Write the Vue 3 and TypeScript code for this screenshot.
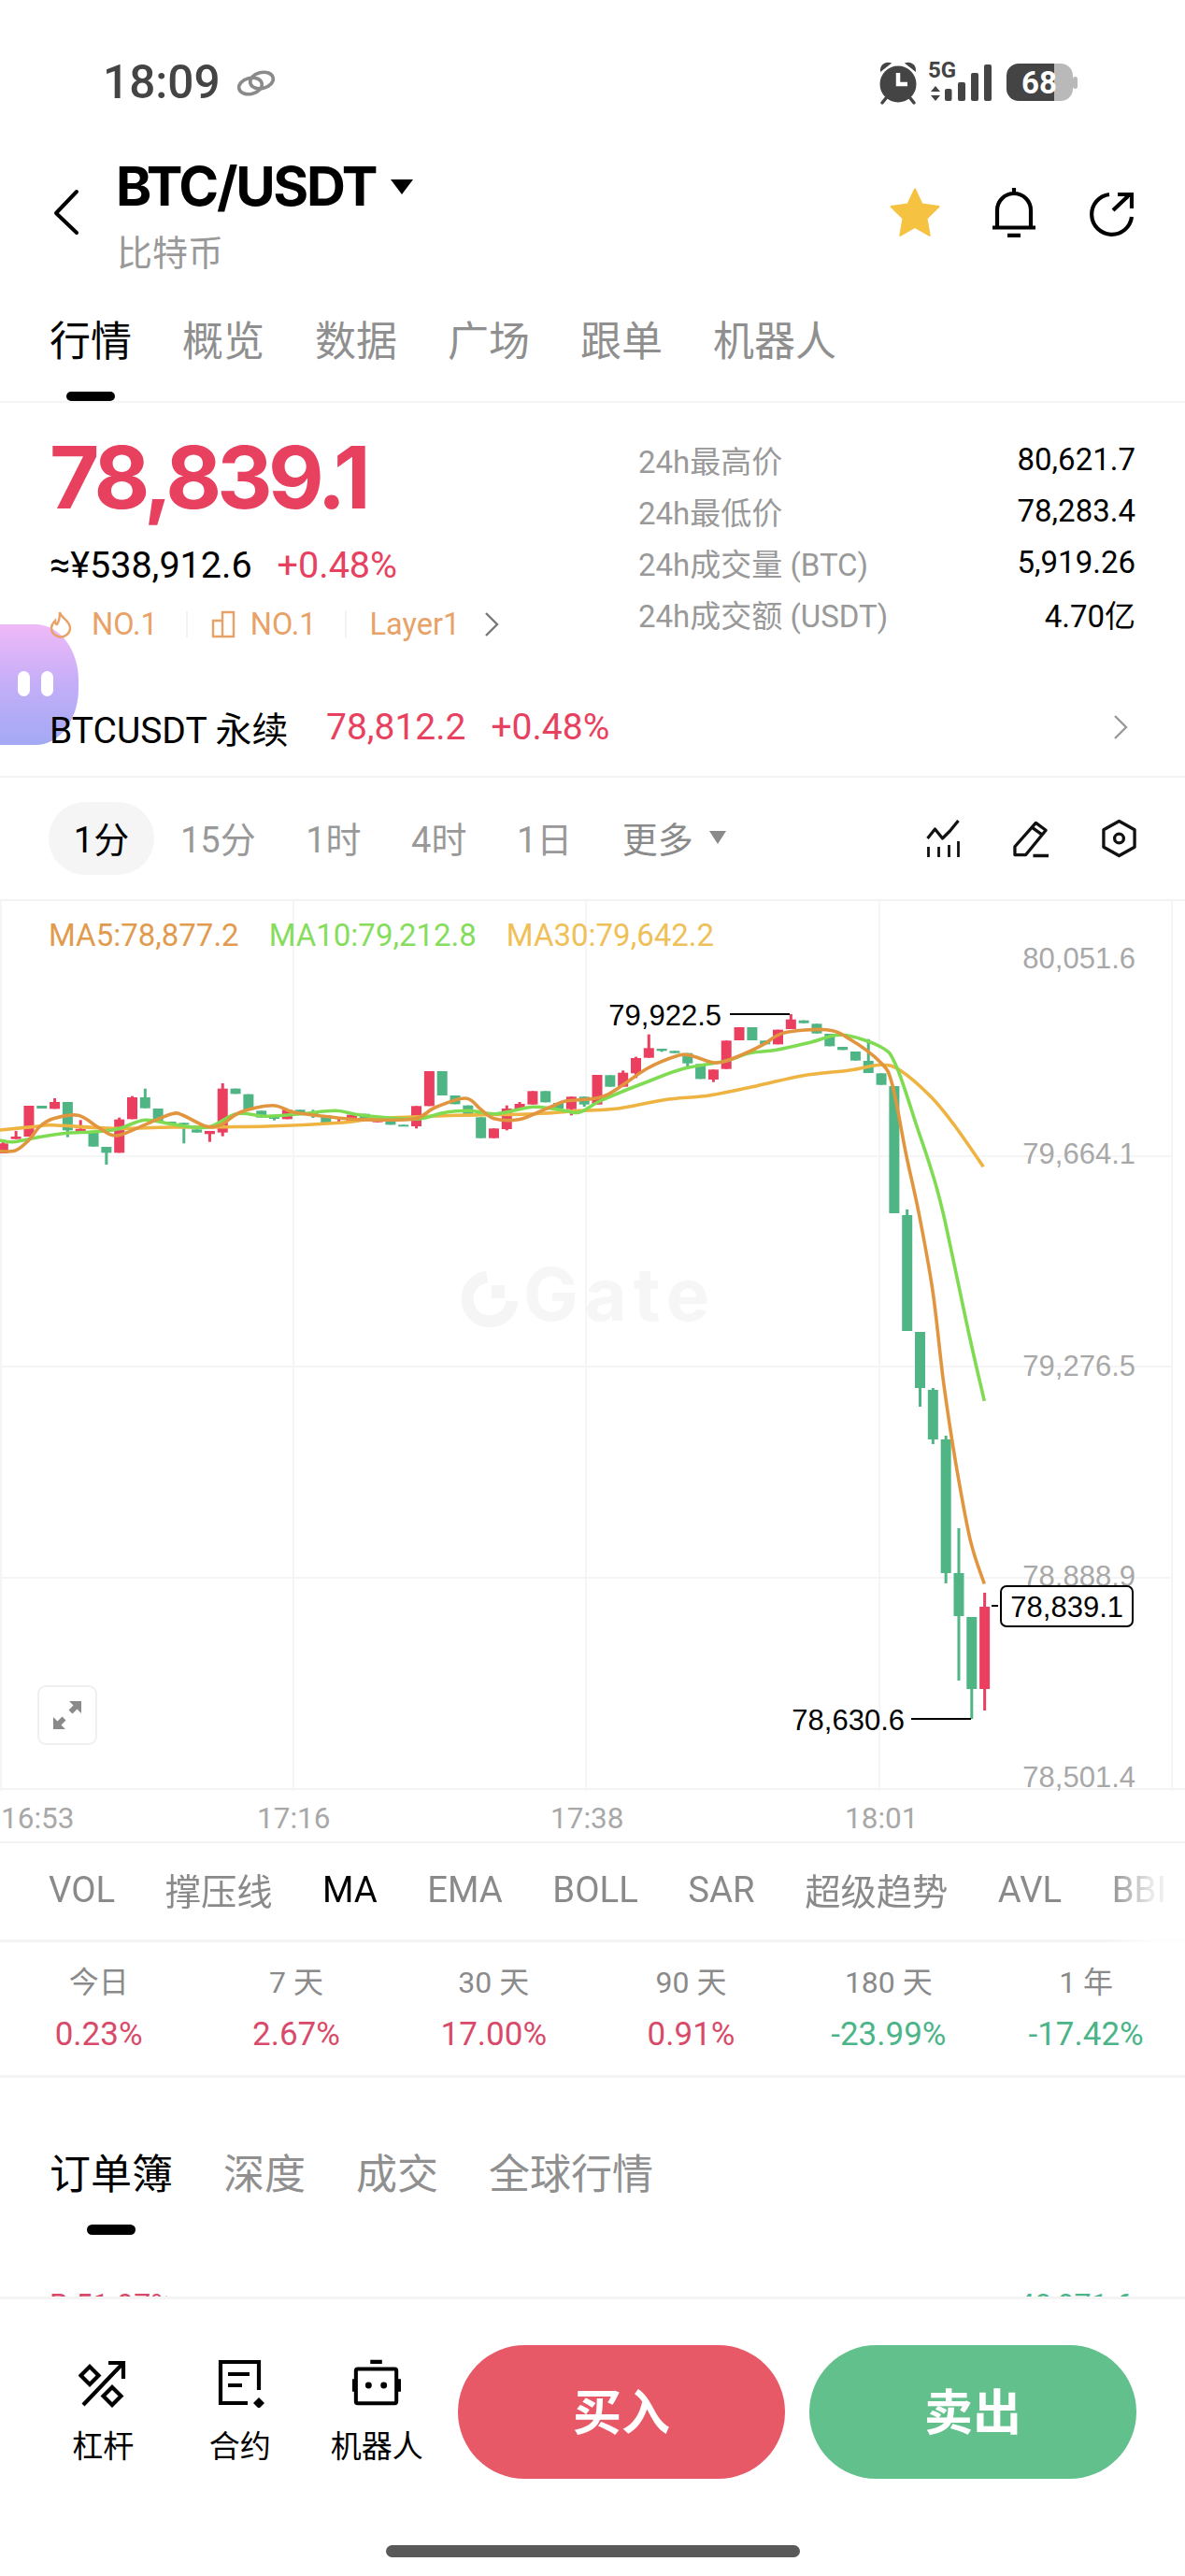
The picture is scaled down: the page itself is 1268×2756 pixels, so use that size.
<script setup lang="ts">
type Pt = [number, number]
const z3 = (p: number[]): Pt => [p[0] / 2.45, 1000 + p[1] / 3]
const z4 = (p: number[]): Pt => [620 + p[0] / 2.42, 1000 + p[1] / 3]
const z5 = (p: number[]): Pt => [880 + p[0] / 3, 1300 + p[1] / 2.53]

function smooth(pts: Pt[]): string {
  let d = `M${pts[0][0].toFixed(1)} ${pts[0][1].toFixed(1)}`
  for (let i = 0; i < pts.length - 1; i++) {
    const p0 = pts[Math.max(0, i - 1)], p1 = pts[i], p2 = pts[i + 1], p3 = pts[Math.min(pts.length - 1, i + 2)]
    const c1x = p1[0] + (p2[0] - p0[0]) / 6, c1y = p1[1] + (p2[1] - p0[1]) / 6
    const c2x = p2[0] - (p3[0] - p1[0]) / 6, c2y = p2[1] - (p3[1] - p1[1]) / 6
    d += `C${c1x.toFixed(1)} ${c1y.toFixed(1)} ${c2x.toFixed(1)} ${c2y.toFixed(1)} ${p2[0].toFixed(1)} ${p2[1].toFixed(1)}`
  }
  return d
}

const ma5 = smooth([
  ...[[0,695],[40,693],[75,660],[105,615],[140,590],[205,580],[260,620],[305,645],[380,610],[450,575],[480,580],[540,615],[580,610],[630,570],[715,548],[770,570],[850,583],[920,592],[990,595],[1090,590],[1140,555],[1220,525],[1260,560],[1295,590],[1360,593],[1420,565],[1480,535]].map(z3),
  ...[[0,530],[70,515],[175,430],[250,390],[285,387],[345,410],[380,405],[440,375],[480,350],[530,315],[640,305],[700,335],[780,410],[810,480],[845,700],[880,900]].map(z4),
  ...[[355,210],[390,460],[430,680],[475,880],[520,998]].map(z5)
])
const ma10 = smooth([
  ...[[0,660],[35,665],[100,650],[175,637],[240,633],[305,625],[380,595],[450,608],[545,618],[620,575],[700,583],[790,575],[880,565],[950,580],[1090,592],[1160,572],[1230,565],[1300,575],[1400,553],[1480,565]].map(z3),
  ...[[0,570],[60,530],[180,470],[270,430],[380,405],[440,380],[510,370],[600,345],[680,322],[780,360],[820,420],[875,620],[910,750],[943,900]].map(z4),
  ...[[470,320],[520,503]].map(z5)
])
const ma30 = smooth([
  ...[[0,627],[100,615],[140,611],[300,622],[450,618],[700,615],[900,603],[990,590],[1200,580],[1400,575]].map(z3),
  ...[[0,565],[100,558],[220,530],[340,515],[460,485],[580,452],[700,435],[780,418],[830,435],[910,520],[970,610],[1046,745]].map(z4)
])

// [colour, bodyTop, bodyBottom, wickTop?, wickBottom?] in zoomed y units (y / 3 + 1000)
type C = [string, number, number, number?, number?]
const raw: C[] = [
  ['r',670,702,658],['r',648,656,630],['r',549,648],['g',549,558],['r',537,559,525],['g',537,628,537,650],['r',623,632,595],['g',630,680],['g',681,700,681,738],['r',593,700,587],
  ['r',522,592,518],['g',522,557,494],['g',558,598],['g',600,606],['g',604,610,604,670],['g',625,635],['r',630,640,630,665],['r',494,635,477,647],['g',494,511],['g',512,562],
  ['g',565,587],['g',585,590,585,596],['r',562,592],['g',562,572],['g',570,575,562,588],['g',580,604],['r',600,604,585],['r',578,597],['g',575,595],['r',595,602],
  ['g',600,610],['g',610,614],['r',550,615,550,622],['r',438,550],['g',438,516],['g',516,544],['g',548,578],['g',586,653],['r',622,653],['r',558,624,548,628],
  ['r',543,558,537],['r',502,545],['g',502,538],['g',540,558],['r',520,560,520,580],['g',520,545,520,552],['r',450,545],['g',451,488],['r',443,488,436],['r',396,445,392,460],
  ['r',364,395,320],['g',366,373,366,376],['g',373,380],['g',380,413,380,428],['g',415,463],['r',433,465,433,473],['r',340,431],['r',297,339],['g',297,339],['g',340,352],
  ['r',305,352],['r',272,303,255],['g',275,284],['g',286,317],['g',318,358],['g',360,370],['g',375,404],['g',405,444,335],['g',445,482],
  ['g',486,894],['g',900,1272,882],['g',1275,1455,1275,1515],['g',1461,1620,1455,1635],['g',1620,2049,1608,2082],['g',2049,2187,1905,2394],['g',2190,2421,2190,2517],['r',2157,2421,2112,2490]
]
const candles = raw.map((c, i) => {
  const conv = (v: number) => 1000 + v / 3
  const x = 3.3 + 13.82 * i
  const top = conv(c[1]), bot = conv(c[2])
  return {
    cls: c[0] === 'r' ? 'up' : 'down',
    x: x - 5.5,
    wx: x - 1.5,
    y: top,
    h: Math.max(bot - top, 2),
    wy: conv(c[3] ?? c[1]),
    wh: conv(c[4] ?? c[2]) - conv(c[3] ?? c[1])
  }
})

const vGrid = [314, 627, 941, 1254]
const hGrid = [1237, 1462, 1688]
const axis = [
  { t: '80,051.6', y: 1036 },
  { t: '79,664.1', y: 1245 },
  { t: '79,276.5', y: 1472 },
  { t: '78,888.9', y: 1697 },
  { t: '78,501.4', y: 1912 }
]
const tabs = ['行情', '概览', '数据', '广场', '跟单', '机器人']
const stats = [
  ['24h最高价', '80,621.7'],
  ['24h最低价', '78,283.4'],
  ['24h成交量 (BTC)', '5,919.26'],
  ['24h成交额 (USDT)', '4.70亿']
]
const periods = ['15分', '1时', '4时', '1日']
const inds = ['VOL', '撑压线', 'MA', 'EMA', 'BOLL', 'SAR', '超级趋势', 'AVL', 'BBI']
const returns = [
  { l: '今日', v: '0.23%', up: true },
  { l: '7 天', v: '2.67%', up: true },
  { l: '30 天', v: '17.00%', up: true },
  { l: '90 天', v: '0.91%', up: true },
  { l: '180 天', v: '-23.99%', up: false },
  { l: '1 年', v: '-17.42%', up: false }
]
const orderTabs = ['订单簿', '深度', '成交', '全球行情']
const times = ['16:53', '17:16', '17:38', '18:01']
</script>

<template>
  <div class="page">
    <div class="blob"><i></i><i></i></div>

    <div class="status">
      <span class="time">18:09</span>
      <svg class="link" viewBox="0 0 42 30" fill="none" stroke="#8a8a8a" stroke-width="3.6">
        <ellipse cx="15" cy="18" rx="12.500" ry="8.500" transform="rotate(-14 15 18)" />
        <ellipse cx="27" cy="12" rx="12.500" ry="8.500" transform="rotate(-14 27 12)" />
      </svg>
      <svg class="sys" viewBox="940 60 216 56">
        <g fill="#444">
          <circle cx="961" cy="90" r="19.5" />
          <path d="M943 75a7 7 0 0 1 9-7zM979 75a7 7 0 0 0-9-7z" stroke="#444" stroke-width="2" />
          <path d="M948 105l-4 5M974 105l4 5" stroke="#444" stroke-width="3.5" stroke-linecap="round" />
          <text x="993" y="83" class="five">5G</text>
          <path d="M1001 92l5 6h-10zM1001 108l5-6h-10z" />
          <rect x="1011" y="95" width="7.5" height="13" rx="2" />
          <rect x="1025" y="88" width="8" height="20" rx="2" />
          <rect x="1039" y="78" width="8" height="30" rx="2" />
          <rect x="1053" y="69" width="8" height="39" rx="2" />
        </g>
        <path d="M961 78v12h10" fill="none" stroke="#fff" stroke-width="4.5" />
        <path d="M1120 68h15a13 13 0 0 1 13 13v14a13 13 0 0 1-13 13h-15z" fill="#b9b9b9" />
        <rect x="1148" y="82" width="5" height="13" rx="2.5" fill="#b9b9b9" />
        <path d="M1090 68h38v40h-38a13 13 0 0 1-13-13V81a13 13 0 0 1 13-13z" fill="#444" />
        <text x="1112" y="100" class="batt">68</text>
      </svg>
    </div>

    <header class="head">
      <svg class="back" viewBox="0 0 30 50" fill="none" stroke="#000" stroke-width="4" stroke-linecap="round" stroke-linejoin="round">
        <path d="M26 3L4 26l22 21" />
      </svg>
      <div class="title">
        <div class="pair">BTC/USDT<span class="tri"></span></div>
        <div class="sub">比特币</div>
      </div>
      <svg class="star" viewBox="0 0 54 52"><path d="M27 1.5l7.5 16 18 2.6-13 12.6 3.2 18.3L27 42l-15.700 9 3.200-18.300-13-12.600 18-2.600z" fill="#f5c242" stroke="#f5c242" stroke-width="2" stroke-linejoin="round" /></svg>
      <svg class="bell" viewBox="0 0 46 54" fill="none" stroke="#000" stroke-width="4.200">
        <path d="M23 1v7M5 43V25a18 18 0 0 1 36 0v18M0 43.500h46" />
        <path d="M16 52h14" stroke-width="4.500" />
      </svg>
      <svg class="share" viewBox="0 0 48 48" fill="none" stroke="#000" stroke-width="4.200">
        <path d="M22 3a21.500 21.500 0 1 0 24 24" />
        <path d="M26 20L44 3M31 3h15v15" />
      </svg>
    </header>

    <nav class="tabs">
      <span v-for="(t, i) in tabs" :key="t" class="tab" :class="{ on: i === 0 }">{{ t }}</span>
    </nav>

    <section class="stat">
      <div class="left">
        <div class="price">78,839.1</div>
        <div class="cny"><span>≈¥538,912.6</span><span class="pct">+0.48%</span></div>
        <div class="tags">
          <svg class="flame" viewBox="0 0 24 30" fill="none" stroke="#e8a268" stroke-width="2.400"><path d="M11 2c1 6 11 9 11 17a10 9.500 0 0 1-20 0c0-4 2-6 4-8 0 3 1 4 2 4 2-3 3-8 3-13z" /></svg>
          <span>NO.1</span>
          <b></b>
          <svg class="bars" viewBox="0 0 26 30" fill="none" stroke="#e8a268" stroke-width="2.400"><path d="M2 28V11h10v17zM12 28V2h12v26zM2 28h22" /></svg>
          <span>NO.1</span>
          <b></b>
          <span>Layer1</span>
          <svg class="chev" viewBox="0 0 16 28" fill="none" stroke="#777" stroke-width="2.400"><path d="M2 2l12 12L2 26" /></svg>
        </div>
      </div>
      <div class="right">
        <div v-for="s in stats" :key="s[0]" class="srow"><span>{{ s[0] }}</span><em>{{ s[1] }}</em></div>
      </div>
    </section>

    <section class="perp">
      <span class="pname">BTCUSDT 永续</span>
      <span class="pval">78,812.2</span>
      <span class="pval">+0.48%</span>
      <svg class="pchev" viewBox="0 0 16 28" fill="none" stroke="#999" stroke-width="2.400"><path d="M2 2l12 12L2 26" /></svg>
    </section>

    <section class="period">
      <span class="pill">1分</span>
      <span v-for="p in periods" :key="p" class="per">{{ p }}</span>
      <span class="per more">更多<span class="tri2"></span></span>
      <div class="ptools">
        <svg viewBox="0 0 38 42" fill="none" stroke="#111" stroke-width="3.200">
          <path d="M2 21l8-10 8 10 8-8 9-11" stroke-linejoin="round" />
          <path d="M3 30v11M14 30v11M25 28v13M35 24v17" stroke-width="2.800" />
        </svg>
        <svg viewBox="0 0 40 42" fill="none" stroke="#111" stroke-width="3.400" stroke-linejoin="round">
          <path d="M2 30L25 4l11 8-22 27H2zM21 9l11 8M22 40h17" />
        </svg>
        <svg viewBox="0 0 40 42" fill="none" stroke="#111" stroke-width="3.400" stroke-linejoin="round">
          <path d="M20 2l17 9.500v19L20 40 3 30.500v-19z" />
          <circle cx="20" cy="21" r="5" />
        </svg>
      </div>
    </section>

    <section class="chart">
      <svg class="plot" viewBox="0 963 1268 953">
        <path d="M1 963v953" class="grid" />
        <path v-for="x in vGrid" :key="x" :d="`M${x} 963v953`" class="grid" />
        <path v-for="y in hGrid" :key="y" :d="`M0 ${y}h1254`" class="grid" />
        <text x="560" y="1413" class="wm">Gate</text>
        <path d="M521 1366a24 24 0 1 0 27 26" fill="none" stroke="#f5f5f5" stroke-width="13" />
        <rect x="526" y="1375" width="14" height="14" fill="#f5f5f5" />
        <text v-for="a in axis" :key="a.t" x="1215" :y="a.y" class="ax">{{ a.t }}</text>

        <g v-for="(c, i) in candles" :key="i" :class="c.cls">
          <rect :x="c.wx" :y="c.wy" width="3" :height="c.wh" />
          <rect :x="c.x" :y="c.y" width="11" :height="c.h" />
        </g>
        <path :d="ma30" class="l30" />
        <path :d="ma10" class="l10" />
        <path :d="ma5" class="l5" />

        <text x="772" y="1097" class="note">79,922.5</text>
        <path d="M781 1085h64" stroke="#000" stroke-width="2" />
        <text x="968" y="1851" class="note">78,630.6</text>
        <path d="M975 1839h64" stroke="#000" stroke-width="2" />
        <path d="M1061 1718h7" stroke="#000" stroke-width="2" />
        <rect x="1071" y="1697" width="141" height="43" rx="6" fill="#fff" stroke="#000" stroke-width="2" />
        <text x="1202" y="1730" class="note">78,839.1</text>
      </svg>

      <div class="legend">
        <span class="m5">MA5:78,877.2</span>
        <span class="m10">MA10:79,212.8</span>
        <span class="m30">MA30:79,642.2</span>
      </div>

      <div class="expand">
        <svg viewBox="0 0 30 30" fill="#8a8a8a">
          <path d="M17 0h13v13l-4.500-4.500-5 5-4-4 5-5zM13 30H0V17l4.500 4.500 5-5 4 4-5 5z" />
        </svg>
      </div>
    </section>

    <div class="times">
      <span v-for="t in times" :key="t">{{ t }}</span>
    </div>

    <div class="inds">
      <span v-for="n in inds" :key="n" :class="{ act: n === 'MA' }">{{ n }}</span>
    </div>

    <div class="rets">
      <div v-for="r in returns" :key="r.l" class="ret">
        <span class="rl">{{ r.l }}</span>
        <span class="rv" :class="r.up ? 'ru' : 'rd'">{{ r.v }}</span>
      </div>
    </div>

    <section class="book">
      <nav class="otabs">
        <span v-for="(t, i) in orderTabs" :key="t" class="otab" :class="{ on: i === 0 }">{{ t }}</span>
      </nav>
      <div class="peek"><span class="ru">B 51.97%</span><span class="rd">48,971.6</span></div>
    </section>

    <footer class="bar">
      <div class="acts">
        <div class="tool">
          <svg viewBox="84 2524 52 52" fill="none" stroke="#000" stroke-width="4.200">
            <path d="M89 2573l42-44M116 2528h16v17" />
            <path d="M96 2532l9.500 9.500-9.500 9.500-9.500-9.500zM120 2554l9.500 9.500-9.500 9.500-9.500-9.500z" />
          </svg>
          <span>杠杆</span>
        </div>
        <div class="tool">
          <svg viewBox="231 2524 52 52" fill="none" stroke="#000" stroke-width="4.200">
            <path d="M277 2557v-30h-41v44h29M244 2540h23M244 2552h15" />
            <path d="M277 2565l6 6-6 6-6-6z" fill="#000" stroke="none" />
          </svg>
          <span>合约</span>
        </div>
        <div class="tool">
          <svg viewBox="377 2524 54 52" fill="none" stroke="#000" stroke-width="4.200">
            <rect x="381" y="2534" width="45" height="38" rx="2" />
            <path d="M397 2526h13M378 2545v14M429 2545v14" />
            <circle cx="395" cy="2552" r="3.600" fill="#000" stroke="none" />
            <circle cx="412" cy="2552" r="3.600" fill="#000" stroke="none" />
          </svg>
          <span>机器人</span>
        </div>
        <button class="btn buy">买入</button>
        <button class="btn sell">卖出</button>
      </div>
      <div class="home"></div>
    </footer>
  </div>
</template>

<style scoped>
* { box-sizing: border-box; }
.page {
  position: relative;
  width: 1268px;
  height: 2756px;
  overflow: hidden;
  background: #fff;
  color: #000;
  font-family: Roboto, "Noto Sans CJK SC", sans-serif;
}
.blob {
  position: absolute;
  left: 0;
  top: 668px;
  width: 84px;
  height: 129px;
  border-radius: 0 46px 46px 0 / 0 60px 60px 0;
  background: linear-gradient(180deg, #efb9f7 0%, #c4aef8 50%, #a3a9f4 100%);
  display: flex;
  gap: 12px;
  padding: 50px 0 0 19px;
}
.blob i {
  width: 13px;
  height: 27px;
  border-radius: 7px;
  background: #fff;
}

.status {
  height: 176px;
  display: flex;
  align-items: center;
  padding: 2px 0 0 110px;
  position: relative;
}
.time { font-size: 49.500px; font-weight: 500; color: #444; line-height: 1; }
.link { width: 42px; height: 30px; margin-left: 17px; }
.sys { position: absolute; left: 940px; top: 60px; width: 216px; height: 56px; }
.five { font: 700 24px Roboto, sans-serif; }
.batt { font: 700 33px Roboto, sans-serif; fill: #fff; text-anchor: middle; }

.head {
  height: 124px;
  display: flex;
  align-items: flex-start;
  position: relative;
}
.back { position: absolute; left: 56px; top: 26px; width: 30px; height: 50px; }
.title { margin-left: 124px; }
.pair {
  position: relative;
  top: 2px;
  font: 700 58px/42px Inter, sans-serif;
  letter-spacing: -2.300px;
  display: flex;
  align-items: flex-start;
}
.tri {
  width: 0; height: 0;
  margin: 14px 0 0 16px;
  border-left: 12px solid transparent;
  border-right: 12px solid transparent;
  border-top: 16px solid #000;
}
.sub { font-size: 38px; line-height: 50px; color: #999; margin-top: 28px; margin-left: 1px; }
.star { position: absolute; left: 952px; top: 25px; width: 54px; height: 52px; }
.bell { position: absolute; left: 1062px; top: 24px; width: 46px; height: 54px; }
.share { position: absolute; left: 1165px; top: 29px; width: 48px; height: 48px; }

.tabs {
  height: 131px;
  display: flex;
  gap: 54px;
  padding: 36px 0 0 53px;
  border-bottom: 2px solid #f5f5f5;
}
.tab { position: relative; font-size: 44px; line-height: 60px; color: #8f8f8f; height: 93px; }
.tab.on { color: #000; }
.tab.on::after {
  content: "";
  position: absolute;
  left: 18px;
  bottom: 0;
  width: 52px;
  height: 10px;
  border-radius: 5px;
  background: #000;
}

.stat {
  position: relative;
  height: 295px;
  display: flex;
}
.left { width: 683px; padding: 34px 0 0 53px; }
.price {
  font: 700 92px/92px Inter, sans-serif;
  color: #e8405f;
  letter-spacing: -4.700px;
}
.cny {
  margin-top: 28px;
  font-size: 39.500px;
  line-height: 40px;
  display: flex;
  gap: 27px;
}
.pct { color: #e8405f; }
.tags {
  margin-top: 23px;
  height: 40px;
  display: flex;
  align-items: center;
  font-size: 32.500px;
  color: #e8a268;
  position: relative;
}
.flame { width: 24px; height: 30px; margin-right: 21px; }
.tags b { width: 2px; height: 28px; background: #f3f3f3; margin: 0 25px 0 30px; }
.bars { width: 26px; height: 30px; margin-right: 16px; }
.chev { width: 16px; height: 28px; margin-left: 26px; }
.right { padding-top: 33px; width: 532px; }
.srow {
  height: 55px;
  display: flex;
  justify-content: space-between;
  align-items: center;
  font-size: 33px;
  color: #999;
}
.srow em { font-style: normal; color: #000; font-size: 33px; }

.perp {
  position: relative;
  height: 106px;
  display: flex;
  align-items: center;
  padding-left: 53px;
  border-bottom: 2px solid #f3f3f3;
  font-size: 39px;
}
.pname { width: 296px; }
.pval { color: #e8405f; margin-right: 27px; }
.pchev { position: absolute; left: 1191px; top: 38px; width: 16px; height: 28px; }

.period {
  height: 130px;
  display: flex;
  align-items: center;
  padding-left: 52px;
  font-size: 38px;
  color: #999;
  position: relative;
}
.pill {
  width: 113px;
  height: 78px;
  border-radius: 39px;
  background: #f5f5f5;
  color: #000;
  display: flex;
  align-items: center;
  justify-content: center;
  margin-right: 28px;
  padding-bottom: 3px;
}
.per { margin-right: 53.500px; padding-bottom: 3px; }
.more { display: flex; align-items: center; color: #8a8a8a; }
.tri2 {
  width: 0; height: 0;
  margin-left: 17px;
  border-left: 9px solid transparent;
  border-right: 9px solid transparent;
  border-top: 14px solid #8a8a8a;
}
.ptools {
  position: absolute;
  left: 990px;
  top: 44px;
  display: flex;
  gap: 55px;
}
.ptools svg { width: 39px; height: 42px; }

.chart {
  position: relative;
  height: 953px;
  border-top: 2px solid #f3f3f3;
  border-bottom: 2px solid #f3f3f3;
}
.plot { position: absolute; left: 0; top: -1px; width: 1268px; height: 953px; }
.grid { stroke: #f5f5f5; stroke-width: 2; fill: none; }
.wm { font: 700 78px Inter, sans-serif; fill: #f6f6f6; letter-spacing: 7px; }
.ax { font: 31px "Liberation Sans", sans-serif; fill: #a8a8a8; text-anchor: end; }
.note { font: 31px "Liberation Sans", sans-serif; fill: #000; text-anchor: end; }
.up rect { fill: #ea3f5f; }
.down rect { fill: #4fb584; }
.l5, .l10, .l30 { fill: none; stroke-width: 3.600; stroke-linejoin: round; }
.l5 { stroke: #e2953f; }
.l10 { stroke: #7fdc52; }
.l30 { stroke: #eeb341; }
.legend {
  position: relative;
  display: flex;
  gap: 32px;
  padding: 17px 0 0 52px;
  font-size: 33px;
  line-height: 40px;
}
.m5 { color: #e19b4e; }
.m10 { color: #86dd5d; }
.m30 { color: #efc058; }
.expand {
  position: absolute;
  left: 40px;
  top: 839px;
  width: 64px;
  height: 64px;
  border: 2px solid #f0f0f0;
  border-radius: 9px;
  background: #fff;
  display: flex;
  align-items: center;
  justify-content: center;
}
.expand svg { width: 30px; height: 30px; }

.times {
  height: 57px;
  display: grid;
  grid-template-columns: 274px 314px 315px auto;
  padding: 5px 0 0 1px;
  align-items: center;
  font-size: 31.500px;
  color: #a8a8a8;
  border-bottom: 2px solid #f3f3f3;
}

.inds {
  height: 106px;
  width: 1268px;
  display: flex;
  align-items: center;
  gap: 53.500px;
  padding: 0 0 4px 52px;
  font-size: 38.300px;
  color: #8a8a8a;
  white-space: nowrap;
  overflow: hidden;
  border-bottom: 3px solid #f4f4f4;
  -webkit-mask-image: linear-gradient(90deg, #000 1185px, rgba(0,0,0,.15) 1235px);
}
.act { color: #000; }

.rets {
  height: 145px;
  display: grid;
  grid-template-columns: repeat(6, 211.300px);
  border-bottom: 3px solid #f4f4f4;
}
.ret {
  display: flex;
  flex-direction: column;
  align-items: center;
  padding-top: 23px;
  font-size: 32px;
  line-height: 40px;
}
.rl { color: #8a8a8a; }
.rv { margin-top: 16px; font-size: 35px; }
.ru { color: #d94a6a; }
.rd { color: #4bb488; }

.book {
  height: 234px;
  overflow: hidden;
}
.otabs {
  display: flex;
  gap: 54px;
  padding: 74px 0 0 53px;
}
.otab { position: relative; font-size: 44px; line-height: 60px; color: #8f8f8f; }
.otab.on { color: #000; }
.otab.on::after {
  content: "";
  position: absolute;
  left: 40px;
  top: 83px;
  width: 52px;
  height: 11px;
  border-radius: 6px;
  background: #000;
}
.peek {
  margin-top: 88px;
  display: flex;
  justify-content: space-between;
  padding: 0 56px 0 53px;
  font-size: 32px;
  line-height: 40px;
}

.bar {
  border-top: 3px solid #f4f4f4;
  height: 299px;
  padding-top: 49px;
}
.acts {
  display: flex;
  align-items: flex-start;
  padding-left: 37px;
  height: 143px;
}
.tool {
  width: 146.500px;
  display: flex;
  flex-direction: column;
  align-items: center;
  padding-top: 15px;
  font-size: 33px;
  line-height: 44px;
}
.tool svg { width: 52px; height: 52px; margin-bottom: 20px; }
.btn {
  width: 350px;
  height: 143px;
  border: 0;
  border-radius: 72px;
  color: #fff;
  padding-bottom: 7px;
  font: 700 52px "Noto Sans CJK SC", sans-serif;
}
.buy { background: #e85968; margin-left: 13.500px; }
.sell { background: #62c08c; margin-left: 26px; }
.home {
  width: 443px;
  height: 13px;
  border-radius: 7px;
  background: #595959;
  margin: 71px auto 0;
}
</style>
<style>
body { margin: 0; background: #fff; }
</style>
